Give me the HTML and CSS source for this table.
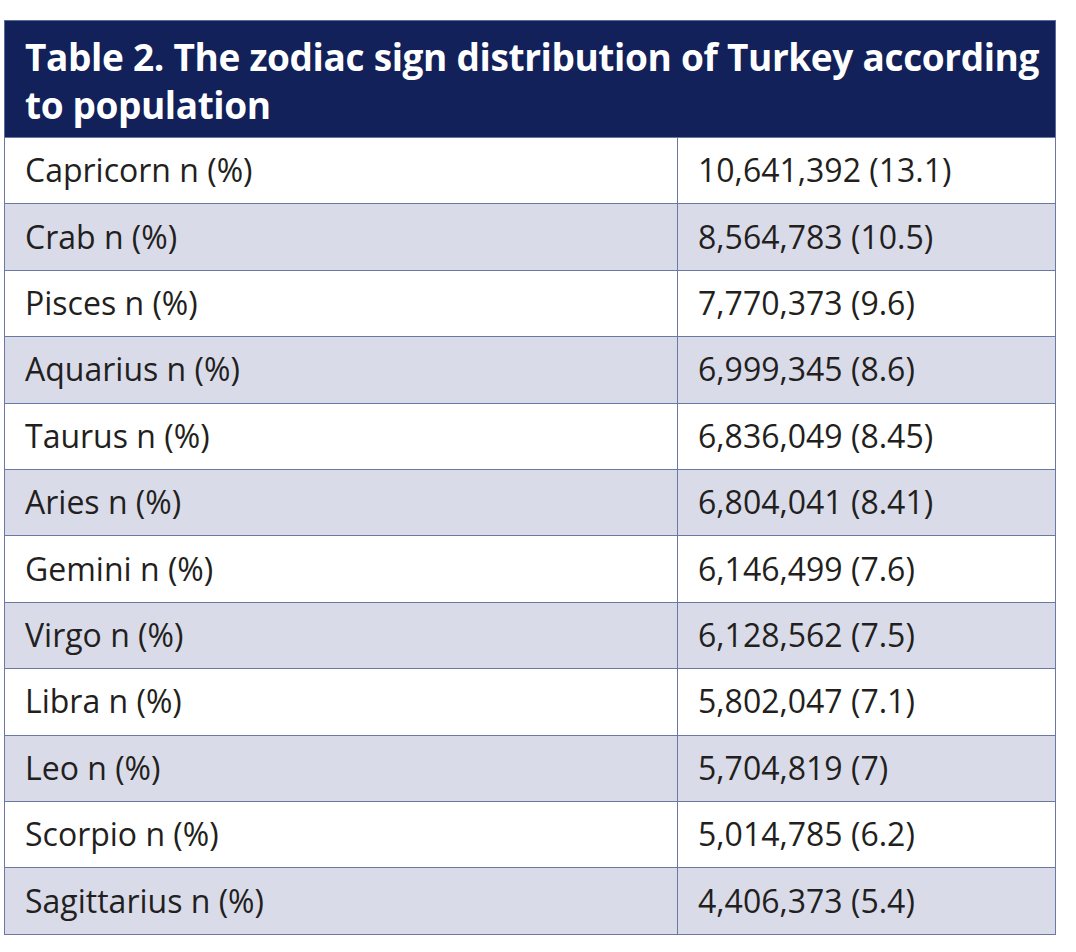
FILE: index.html
```html
<!DOCTYPE html>
<html>
<head>
<meta charset="utf-8">
<link rel="stylesheet" href="styles.css">
</head>
<body>
<div class="wrap">
  <div class="caption">Table 2. The zodiac sign distribution of Turkey according to population</div>
  <table class="data">
    <tbody>
      <tr><td>Capricorn n (%)</td><td>10,641,392 (13.1)</td></tr>
      <tr class="alt"><td>Crab n (%)</td><td>8,564,783 (10.5)</td></tr>
      <tr><td>Pisces n (%)</td><td>7,770,373 (9.6)</td></tr>
      <tr class="alt"><td>Aquarius n (%)</td><td>6,999,345 (8.6)</td></tr>
      <tr><td>Taurus n (%)</td><td>6,836,049 (8.45)</td></tr>
      <tr class="alt"><td>Aries n (%)</td><td>6,804,041 (8.41)</td></tr>
      <tr><td>Gemini n (%)</td><td>6,146,499 (7.6)</td></tr>
      <tr class="alt"><td>Virgo n (%)</td><td>6,128,562 (7.5)</td></tr>
      <tr><td>Libra n (%)</td><td>5,802,047 (7.1)</td></tr>
      <tr class="alt"><td>Leo n (%)</td><td>5,704,819 (7)</td></tr>
      <tr><td>Scorpio n (%)</td><td>5,014,785 (6.2)</td></tr>
      <tr class="alt"><td>Sagittarius n (%)</td><td>4,406,373 (5.4)</td></tr>
    </tbody>
  </table>
</div>
</body>
</html>
```
FILE: styles.css
```css
html, body { margin: 0; padding: 0; background: #ffffff; }
body { padding: 20px 0 0 4px; font-family: "Open Sans", "Noto Sans", sans-serif; }
.wrap { width: 1052px; }
.caption {
  box-sizing: border-box;
  height: 117px;
  background: #12215a;
  color: #ffffff;
  font-weight: 700;
  font-size: 37px;
  letter-spacing: -0.4px;
  line-height: 48px;
  padding: 12px 16px 0 20px;
  text-align: justify;
  border: 1px solid #5a6a9a;
  border-bottom: none;
}
.data {
  width: 100%;
  border-collapse: collapse;
  font-size: 32px;
  color: #231f20;
}
.data td {
  border: 1px solid #6b78a3;
  height: 66.42px;
  padding: 0 0 2px 20px;
  box-sizing: border-box;
  white-space: nowrap;
}
.data td:first-child { width: 673px; }
.data tr.alt td { background: #d9dbe9; }
```
